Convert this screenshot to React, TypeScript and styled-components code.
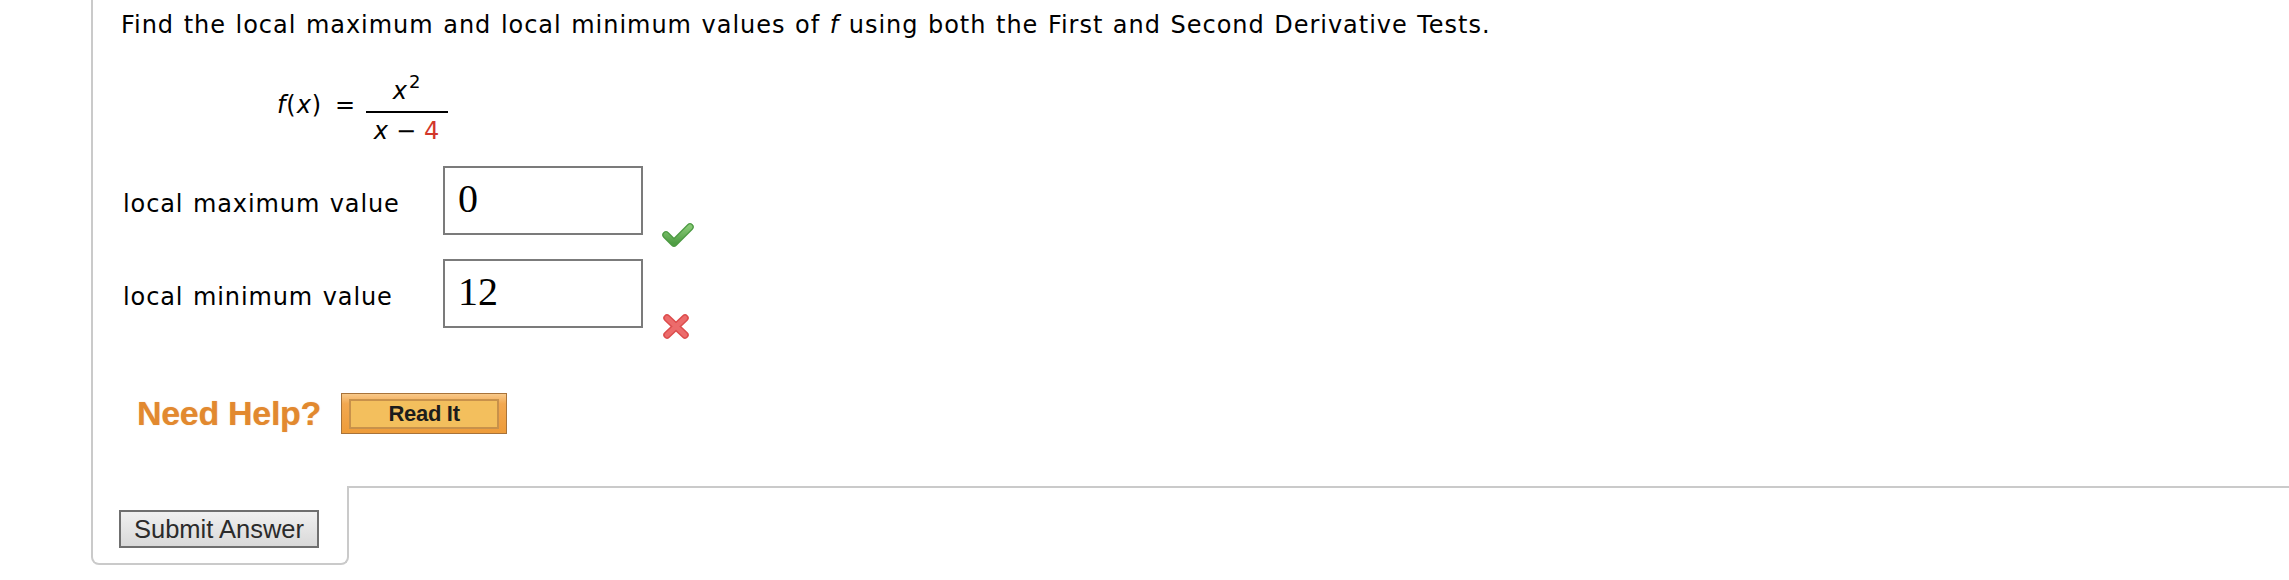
import React from "react";
import styled, { createGlobalStyle } from "styled-components";

const GlobalStyle = createGlobalStyle`
  html, body { margin: 0; padding: 0; background: #ffffff; }
  body { width: 2289px; height: 580px; overflow: hidden; }
`;

const Page = styled.div`
  padding-left: 91px;
  display: flex;
  flex-direction: column;
  font-family: "DejaVu Sans", Verdana, sans-serif;
  color: #000;
`;

const Question = styled.div`
  border-left: 2px solid #cacaca;
  padding: 11px 0 52px 0;
  display: flex;
  flex-direction: column;
  align-items: flex-start;
`;

const Prompt = styled.p`
  margin: 0 0 0 28px;
  font-size: 24px;
  line-height: 28px;
  letter-spacing: 0.97px;
  word-spacing: 1px;
  white-space: nowrap;
`;

const FormulaRow = styled.div`
  display: flex;
  align-items: flex-start;
  margin: 38px 0 0 184px;
  font-size: 24px;
  line-height: 28px;
  letter-spacing: 0.9px;
`;

const Lhs = styled.span`
  margin-top: 14px;
  white-space: nowrap;
`;

const Equals = styled.span`
  margin: 14px 10px 0 13px;
`;

const Fraction = styled.span`
  display: inline-flex;
  flex-direction: column;
  align-items: center;
  width: 82px;
`;

const Numerator = styled.span`
  padding-bottom: 6px;
  white-space: nowrap;
`;

const Sup = styled.sup`
  font-size: 18px;
  line-height: 0;
  vertical-align: 11px;
  margin-left: 1px;
`;

const Bar = styled.span`
  align-self: stretch;
  height: 2px;
  background: #000;
`;

const Denominator = styled.span`
  padding-top: 4px;
  white-space: nowrap;
`;

const Op = styled.span`
  margin: 0 7px;
`;

const Red = styled.span`
  color: #d2372b;
`;

const AnswerList = styled.div`
  display: flex;
  flex-direction: column;
  gap: 24px;
  margin: 21px 0 0 30px;
`;

const AnswerRow = styled.div`
  display: flex;
  align-items: baseline;
`;

const Label = styled.span`
  width: 320px;
  font-size: 24px;
  line-height: 28px;
  letter-spacing: 0.9px;
  word-spacing: 1px;
`;

const AnswerBox = styled.div`
  box-sizing: border-box;
  width: 200px;
  height: 69px;
  border: 2px solid #7b7b7b;
  padding: 8px 13px 0;
  font-family: "Liberation Serif", "Times New Roman", serif;
  font-size: 40px;
  line-height: 46px;
`;

const Mark = styled.svg<{ $drop: number }>`
  align-self: flex-end;
  flex: none;
  margin: 0 0 ${(p) => -p.$drop}px 19px;
`;

const HelpRow = styled.div`
  display: flex;
  align-items: center;
  gap: 20px;
  margin: 65px 0 0 44px;
`;

const NeedHelp = styled.span`
  font-family: "Liberation Sans", Arial, sans-serif;
  font-weight: bold;
  font-size: 34px;
  letter-spacing: -0.3px;
  color: #e2892f;
  text-shadow: 0 0 1px rgba(226, 137, 47, 0.55);
`;

const ReadItButton = styled.button`
  box-sizing: border-box;
  width: 166px;
  height: 41px;
  padding: 5px 7px 4px 7px;
  border: 1px solid #a8733a;
  border-radius: 0;
  background: linear-gradient(#f8c98a 0%, #f2a850 25%, #ee9c3a 100%);
  display: flex;
  cursor: pointer;
`;

const ReadItInner = styled.span`
  flex: 1;
  border: 2px solid #c8914a;
  background: #f3bf5d;
  display: flex;
  align-items: center;
  justify-content: center;
  font-family: "Liberation Sans", Arial, sans-serif;
  font-weight: bold;
  font-size: 22px;
  letter-spacing: -0.3px;
  color: #1c1c1c;
`;

const Footer = styled.div`
  display: flex;
`;

const SubmitTab = styled.div`
  box-sizing: border-box;
  width: 258px;
  border: 2px solid #cacaca;
  border-top: none;
  border-radius: 0 0 8px 8px;
  padding: 24px 0 15px 26px;
`;

const SubmitButton = styled.button`
  box-sizing: border-box;
  width: 200px;
  height: 38px;
  padding: 0;
  border: 2px solid #6f6f6f;
  border-radius: 0;
  background: linear-gradient(#f0f0f0, #d9d9d9);
  font-family: "Liberation Sans", Arial, sans-serif;
  font-size: 25.5px;
  color: #2b2b2b;
  display: block;
`;

const FooterRule = styled.div`
  flex: 1;
  border-top: 2px solid #cacaca;
`;

const CheckMark = () => (
  <Mark $drop={12} width="32" height="25" viewBox="0 0 32 25">
    <defs>
      <linearGradient id="chk" x1="0" y1="0" x2="0" y2="1">
        <stop offset="0" stopColor="#86c874" />
        <stop offset="1" stopColor="#4f9d44" />
      </linearGradient>
    </defs>
    <polyline
      points="4,13 12,21 28,5"
      fill="none"
      stroke="#4c9a42"
      strokeWidth="7.5"
      strokeLinecap="round"
      strokeLinejoin="round"
    />
    <polyline
      points="4,13 12,21 28,5"
      fill="none"
      stroke="url(#chk)"
      strokeWidth="5"
      strokeLinecap="round"
      strokeLinejoin="round"
    />
  </Mark>
);

const CrossMark = () => (
  <Mark $drop={12} width="28" height="27" viewBox="0 0 28 27">
    <g fill="none" strokeLinecap="round">
      <path d="M5 5 L23 22 M23 5 L5 22" stroke="#dc4c4c" strokeWidth="7.5" />
      <path d="M5 5 L23 22 M23 5 L5 22" stroke="#ec6b6b" strokeWidth="4.5" />
    </g>
  </Mark>
);

export default function App() {
  return (
    <>
      <GlobalStyle />
      <Page>
        <Question>
          <Prompt>
            Find the local maximum and local minimum values of <i>f</i> using both the First and Second
            Derivative Tests.
          </Prompt>
          <FormulaRow>
            <Lhs>
              <i>f</i>(<i>x</i>)
            </Lhs>
            <Equals>=</Equals>
            <Fraction>
              <Numerator>
                <i>x</i>
                <Sup>2</Sup>
              </Numerator>
              <Bar />
              <Denominator>
                <i>x</i>
                <Op>−</Op>
                <Red>4</Red>
              </Denominator>
            </Fraction>
          </FormulaRow>
          <AnswerList>
            <AnswerRow>
              <Label>local maximum value</Label>
              <AnswerBox>0</AnswerBox>
              <CheckMark />
            </AnswerRow>
            <AnswerRow>
              <Label>local minimum value</Label>
              <AnswerBox>12</AnswerBox>
              <CrossMark />
            </AnswerRow>
          </AnswerList>
          <HelpRow>
            <NeedHelp>Need Help?</NeedHelp>
            <ReadItButton type="button">
              <ReadItInner>Read It</ReadItInner>
            </ReadItButton>
          </HelpRow>
        </Question>
        <Footer>
          <SubmitTab>
            <SubmitButton type="button">Submit Answer</SubmitButton>
          </SubmitTab>
          <FooterRule />
        </Footer>
      </Page>
    </>
  );
}
